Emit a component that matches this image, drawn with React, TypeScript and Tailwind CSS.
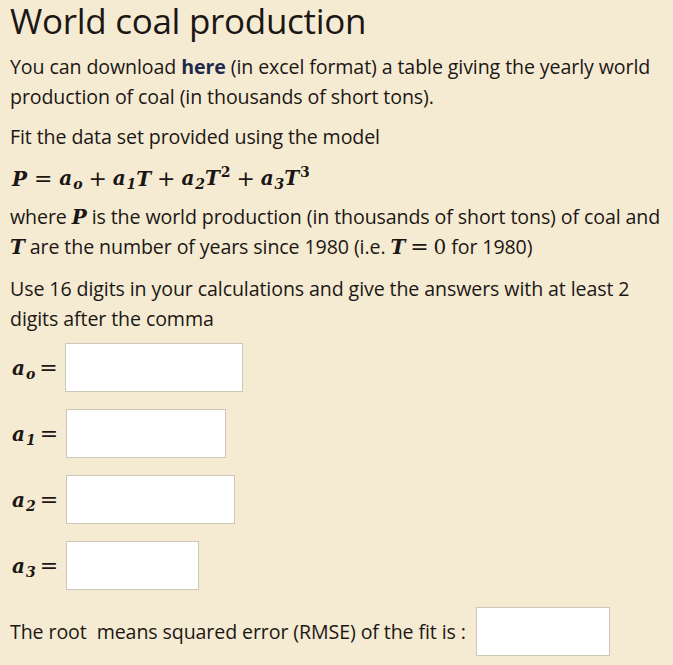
import React from "react";

const serif = "font-['DejaVu_Serif',serif]";

function Op({ c, mx = "mx-[5px]" }: { c: string; mx?: string }) {
  return <span className={`font-['DejaVu_Sans',sans-serif] font-normal not-italic text-[22px] ${mx}`}>{c}</span>;
}

function Var({ base, sub, sup }: { base: string; sub?: string; sup?: string }) {
  return (
    <span className="inline-flex items-baseline">
      <span className="italic">{base}</span>
      {sub && <span className="text-[0.7em] relative top-[0.28em] ml-[1px] italic">{sub}</span>}
      {sup && <span className="text-[0.7em] relative -top-[0.55em] ml-[1px] not-italic">{sup}</span>}
    </span>
  );
}

function Field({ sub, width, ml }: { sub: string; width: string; ml: string }) {
  return (
    <div className="flex items-center h-[49px]">
      <span className={`w-[65px] pl-[12px] ${serif} font-bold text-[20px] text-[#1c1714] flex items-baseline`}>
        <Var base="a" sub={sub} />
        <Op c="=" mx="ml-[4px]" />
      </span>
      <div className={`h-[49px] bg-white border border-[#cdc7ba] ${width} ${ml}`} />
    </div>
  );
}

export default function App() {
  return (
    <div className="w-[673px] h-[665px] bg-[#f5ebd3] text-[#1c1714] font-['Open_Sans',sans-serif] overflow-hidden">
      <h1 className="pl-[10px] text-[35px] leading-[42px] tracking-[-0.3px]">World coal production</h1>
      <div className="pl-[10px] text-[19.6px] leading-[30px] mt-[10px] tracking-[-0.1px]">
        <p>
          You can download <span className="font-bold text-[#1e2a4a]">here</span> (in excel format) a table giving the yearly world
          <br />
          production of coal (in thousands of short tons).
        </p>
        <p className="mt-[10px]">Fit the data set provided using the model</p>
        <p className={`mt-[9px] h-[36px] pl-[2px] ${serif} font-bold text-[20px] flex items-center whitespace-nowrap`}>
          <Var base="P" /><Op c="=" mx="mx-[7px]" /><Var base="a" sub="o" />
          <Op c="+" mx="mx-[6px]" /><Var base="a" sub="1" /><Var base="T" />
          <Op c="+" mx="mx-[6px]" /><Var base="a" sub="2" /><Var base="T" sup="2" />
          <Op c="+" mx="mx-[6px]" /><Var base="a" sub="3" /><Var base="T" sup="3" />
        </p>
        <p className="mt-[5px] whitespace-nowrap">
          where <span className={`${serif} italic font-bold text-[20px]`}>P</span> is the world production (in thousands of short tons) of coal and
          <br />
          <span className={`${serif} italic font-bold text-[20px]`}>T</span> are the number of years since 1980 (i.e.{" "}
          <span className={`${serif} italic font-bold text-[20px]`}>T</span>
          <Op c="=" mx="mx-[5px]" />
          <span className={`${serif} text-[20px]`}>0</span> for 1980)
        </p>
        <p className="mt-[12px]">
          Use 16 digits in your calculations and give the answers with at least 2
          <br />
          digits after the comma
        </p>
      </div>
      <div className="mt-[9px] flex flex-col gap-[17px]">
        <Field sub="o" width="w-[178px]" ml="ml-0" />
        <Field sub="1" width="w-[160px]" ml="ml-[1px]" />
        <Field sub="2" width="w-[169px]" ml="ml-[1px]" />
        <Field sub="3" width="w-[133px]" ml="ml-[1px]" />
      </div>
      <div className="mt-[17px] pl-[10px] flex items-center text-[19.6px] tracking-[-0.1px]">
        <span className="w-[466px] whitespace-nowrap">The root&nbsp; means squared error (RMSE) of the fit is :</span>
        <div className="h-[49px] w-[134px] bg-white border border-[#cdc7ba]" />
      </div>
    </div>
  );
}
